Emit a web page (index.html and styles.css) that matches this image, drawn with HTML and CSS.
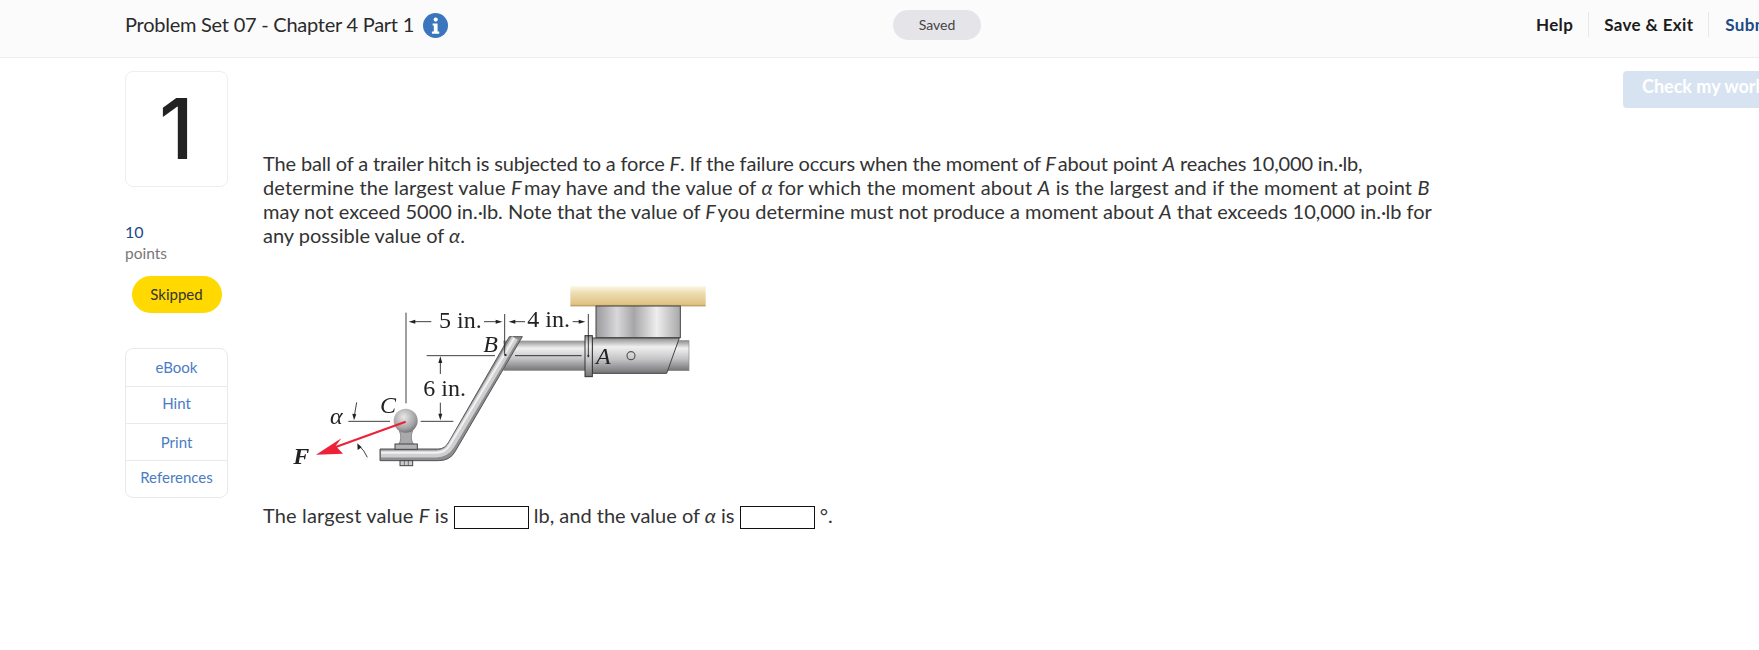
FILE: index.html
```html
<!DOCTYPE html>
<html lang="en">
<head>
<meta charset="utf-8">
<title>Problem Set 07 - Chapter 4 Part 1</title>
<link rel="stylesheet" href="styles.css">
</head>
<body>
<header class="topbar">
  <div class="title">Problem Set 07 - Chapter 4 Part 1</div>
  <svg class="info" viewBox="0 0 25 25" aria-hidden="true">
    <circle cx="12.5" cy="12.5" r="12.5" fill="#3a75bd"/>
    <circle cx="12.7" cy="6.6" r="2.1" fill="#fff"/>
    <path d="M9.6 10.4h5v8.2h1.6v2.1H8.9v-2.1h1.9v-6.1H9.6z" fill="#fff"/>
  </svg>
  <div class="saved">Saved</div>
  <nav class="nav">
    <a class="nav-item">Help</a>
    <a class="nav-item">Save &amp; Exit</a>
    <a class="nav-item nav-submit">Submit</a>
  </nav>
</header>
<main class="layout">
  <aside class="side">
    <div class="qnum">1</div>
    <div class="pts">10</div>
    <div class="pts-label">points</div>
    <div class="status">Skipped</div>
    <ul class="tools">
      <li>eBook</li>
      <li>Hint</li>
      <li>Print</li>
      <li>References</li>
    </ul>
  </aside>
  <section class="question">
    <p class="prompt"><span class="line-tight">The ball of a trailer hitch is subjected to a force <i>F</i>. If the failure occurs when the moment of <i class="v">F</i> about point <i>A</i> reaches 10,000 in.·lb,</span><br><span class="line-loose">determine the largest value <i class="v">F</i> may have and the value of <i>α</i> for which the moment about <i>A</i> is the largest and if the moment at point <i>B</i></span><br>may not exceed 5000 in.·lb. Note that the value of <i class="v">F</i> you determine must not produce a moment about <i>A</i> that exceeds 10,000 in.·lb for<br>any possible value of <i>α</i>.</p>
    <svg class="figure" viewBox="0 0 1350 660" aria-label="Trailer hitch diagram">
      <defs>
        <linearGradient id="wood" x1="0" y1="0" x2="0" y2="1">
          <stop offset="0" stop-color="#fdf8ea"/>
          <stop offset=".35" stop-color="#eedcaf"/>
          <stop offset=".9" stop-color="#e0c385"/>
          <stop offset="1" stop-color="#a88a4c"/>
        </linearGradient>
        <linearGradient id="cyl" x1="0" y1="0" x2="1" y2="0">
          <stop offset="0" stop-color="#9a9a9c"/>
          <stop offset=".25" stop-color="#d8d8da"/>
          <stop offset=".45" stop-color="#a6a6a8"/>
          <stop offset=".72" stop-color="#eeeeee"/>
          <stop offset="1" stop-color="#a8a8aa"/>
        </linearGradient>
        <linearGradient id="tube" x1="0" y1="0" x2="0" y2="1">
          <stop offset="0" stop-color="#8f8f91"/>
          <stop offset=".25" stop-color="#f0f0f0"/>
          <stop offset=".6" stop-color="#c4c4c6"/>
          <stop offset="1" stop-color="#747476"/>
        </linearGradient>
        <radialGradient id="ball" cx=".42" cy=".35" r=".7">
          <stop offset="0" stop-color="#e8e8e8"/>
          <stop offset=".7" stop-color="#a2a2a4"/>
          <stop offset="1" stop-color="#6c6c6e"/>
        </radialGradient>
      </defs>
      <rect x="901" y="48" width="406" height="61" fill="url(#wood)"/>
      <rect x="978" y="108" width="253" height="95" fill="url(#cyl)" stroke="#444" stroke-width="3"/>
      <rect x="700" y="212" width="250" height="90" fill="url(#tube)"/>
      <rect x="960" y="212" width="297" height="90" fill="url(#tube)" stroke="#888" stroke-width="2"/>
      <path d="M967 204H1228L1190 310H967Z" fill="url(#tube)" stroke="#444" stroke-width="3"/>
      <rect x="945" y="197" width="22" height="123" fill="url(#tube)" stroke="#333" stroke-width="3"/>
      <path d="M735 257H935" stroke="#333" stroke-width="3"/>
      <circle cx="1083" cy="257" r="12" fill="none" stroke="#555" stroke-width="3.5"/>
      <path d="M718 200H757L555 545Q540 572 505 572H330V537H505Q525 537 537 515Z" fill="#8d8d8f" stroke="#555" stroke-width="3"/>
      <path d="M735 204L544 526Q528 552 498 552H333" fill="none" stroke="#cfcfd1" stroke-width="21"/>
      <path d="M733 204L540 524Q526 548 498 548H333" fill="none" stroke="#f1f1f1" stroke-width="6"/>
      <rect x="390" y="572" width="38" height="15" fill="#ccc" stroke="#444" stroke-width="3"/>
      <path d="M403 572V587M415 572V587" stroke="#444" stroke-width="2"/>
      <path d="M388 482H428Q418 505 432 525H385Q398 505 388 482Z" fill="#a9a9ab" stroke="#666" stroke-width="2"/>
      <rect x="375" y="522" width="67" height="16" fill="#b4b4b6" stroke="#444" stroke-width="3"/>
      <circle cx="407" cy="452" r="36" fill="url(#ball)"/>
      <g fill="none" stroke="#222" stroke-width="2.6">
        <path d="M408 128V400M704 132V257M955 132V262"/>
        <path d="M470 257H675M235 454H360M452 454H550"/>
        <path d="M430 155H484M642 155H685M728 155H765M908 155H935M511 272V312M511 398V438M260 397L253 438M292 562Q282 540 270 530"/>
      </g>
      <g fill="#222">
        <path d="M416 155L436 149V161Z"/>
        <path d="M697 155L677 149V161Z"/>
        <path d="M716 155L736 149V161Z"/>
        <path d="M946 155L926 149V161Z"/>
        <path d="M511 259L505 279H517Z"/>
        <path d="M511 451L505 431H517Z"/>
        <path d="M252 451L247 431L259 433Z"/>
        <path d="M262 520L263 540L275 532Z"/>
        <circle cx="707" cy="255" r="3"/>
        <circle cx="955" cy="257" r="3"/>
      </g>
      <path d="M407 455L195 532" stroke="#ed2138" stroke-width="6.5"/>
      <path d="M138 554L214 505L197 528L219 551Z" fill="#ed2138"/>
      <g class="fig-text">
        <text x="507" y="174">5 in.</text>
        <text x="772" y="172">4 in.</text>
        <text x="460" y="378">6 in.</text>
        <text class="fig-it" x="640" y="245">B</text>
        <text class="fig-it" x="978" y="282">A</text>
        <text class="fig-it" x="330" y="428">C</text>
        <text class="fig-it" x="180" y="463">α</text>
        <text class="fig-it fig-bold" x="70" y="582">F</text>
      </g>
    </svg>
    <p class="answer"><span class="lead">The largest value <i>F</i> is</span> <span class="blank"></span> lb, and the value of <i>α</i> is <span class="blank"></span> °.</p>
  </section>
  <div class="actions"><button class="check" type="button">Check my work</button></div>
</main>
</body>
</html>
```
FILE: styles.css
```css
html, body {
  margin: 0;
  padding: 0;
  height: 650px;
  overflow: hidden;
  background: #fff;
}
body {
  width: 1759px;
  font-family: Lato, "Open Sans", sans-serif;
  color: #333;
}
.topbar {
  display: flex;
  align-items: center;
  box-sizing: border-box;
  height: 58px;
  padding: 0 0 7px 125px;
  background: #fbfbfc;
  border-bottom: 1px solid #eeeeef;
  white-space: nowrap;
}
.title {
  flex: none;
  width: 298px;
  margin-top: -2px;
  font-size: 20px;
  letter-spacing: -.25px;
  color: #2a2a2a;
}
.info {
  width: 25px;
  height: 25px;
  flex: none;
}
.saved {
  flex: none;
  width: 88px;
  height: 30px;
  margin-left: 445px;
  border-radius: 15px;
  background: #e5e4e8;
  font-size: 14px;
  line-height: 30px;
  text-align: center;
  color: #444;
}
.nav {
  display: flex;
  flex: none;
  margin-left: 540px;
  margin-top: -2px;
}
.nav-item {
  height: 25px;
  line-height: 25px;
  padding: 0 15px;
  font-size: 17px;
  font-weight: 700;
  letter-spacing: .35px;
  color: #1c1c1c;
  border-right: 1px solid #e8e8ea;
}
.nav-submit {
  color: #1d4a86;
  padding-left: 16px;
  border-right: 0;
}
.layout {
  display: grid;
  grid-template-columns: 103px 1327px 160px;
  column-gap: 34px;
  padding: 13px 0 0 125px;
}
.side {
  display: flex;
  flex-direction: column;
}
.qnum {
  height: 114px;
  border: 1px solid #eeeeef;
  border-radius: 8px;
  font-family: Inter, sans-serif;
  font-size: 84px;
  font-weight: 500;
  line-height: 114px;
  text-align: center;
  color: #222;
}
.pts {
  margin-top: 33px;
  font-size: 16px;
  line-height: 24px;
  color: #1d4a86;
}
.pts-label {
  font-size: 15.5px;
  line-height: 19px;
  color: #777;
}
.status {
  align-self: center;
  width: 90px;
  height: 37px;
  margin-top: 13px;
  border-radius: 19px;
  background: #ffd900;
  font-size: 15px;
  line-height: 37px;
  text-align: center;
  color: #333;
}
.tools {
  margin: 35px 0 0;
  padding: 0;
  list-style: none;
  border: 1px solid #e9e9eb;
  border-radius: 8px;
  font-size: 15px;
  text-align: center;
  color: #4a7cc4;
}
.tools li {
  height: 36px;
  line-height: 33px;
  border-top: 1px solid #e9e9eb;
}
.tools li:first-child {
  border-top: 0;
  height: 37px;
  line-height: 37px;
}
.tools li:nth-child(3) {
  line-height: 37px;
}
.question {
  padding: 80px 0 0 1px;
}
.prompt, .answer {
  margin: 0;
  font-size: 20px;
  line-height: 24px;
  color: #333;
  white-space: nowrap;
}
.line-tight {
  letter-spacing: -.15px;
}
.line-loose {
  letter-spacing: .165px;
}
.lead {
  letter-spacing: .15px;
}
.v {
  margin-right: -3px;
}
.figure {
  display: block;
  width: 450px;
  height: 220px;
  margin: 23px 0 13px 7px;
  filter: blur(.35px);
}
.fig-text {
  font-family: "Liberation Serif", serif;
  font-size: 72px;
  fill: #222;
}
.fig-it {
  font-style: italic;
}
.fig-bold {
  font-weight: 700;
}
.blank {
  display: inline-block;
  width: 73px;
  height: 21px;
  border: 1px solid #111;
  vertical-align: middle;
  background: #fff;
}
.check {
  display: block;
  width: 160px;
  height: 37px;
  padding: 0 0 8px 19px;
  border: 0;
  border-radius: 4px;
  background: #d8e3f2;
  font-family: inherit;
  font-size: 18px;
  font-weight: 700;
  color: #fff;
  text-align: left;
  white-space: nowrap;
  overflow: hidden;
}
.actions {
  width: 160px;
}
```
